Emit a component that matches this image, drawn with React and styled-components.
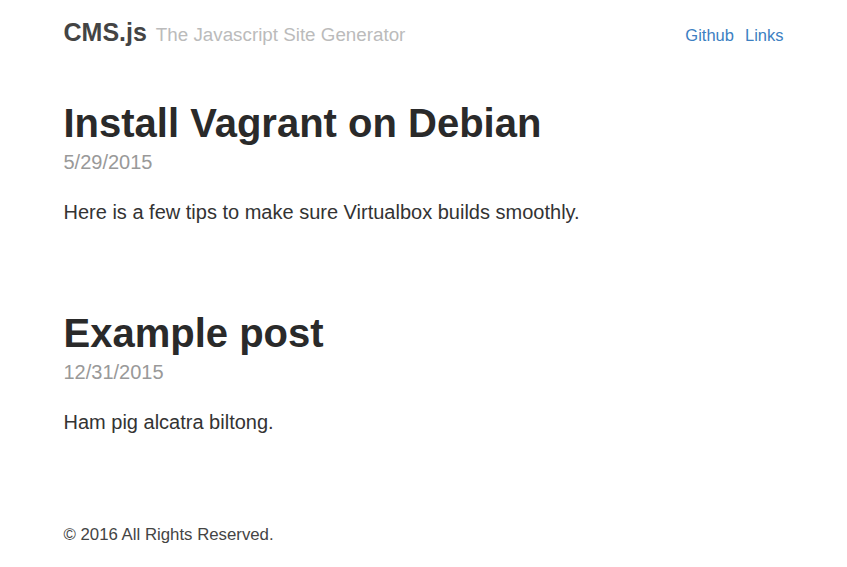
import React from 'react';
import styled, { createGlobalStyle } from 'styled-components';

const GlobalStyle = createGlobalStyle`
  body {
    margin: 0;
    background: #fff;
    font-family: 'Liberation Sans', Arial, sans-serif;
    color: #333;
  }
`;

const Container = styled.div`
  width: 720px;
  margin: 0 auto;
`;

const Header = styled.header`
  display: flex;
  align-items: baseline;
  justify-content: space-between;
  padding: 17px 0 12px;
  line-height: 30px;
`;

const Brand = styled.div`
  display: flex;
  align-items: baseline;
  gap: 9px;
`;

const Logo = styled.a`
  font-size: 25px;
  font-weight: 700;
  color: #444;
  text-decoration: none;
`;

const Tagline = styled.span`
  font-size: 18.8px;
  color: #bbb;
`;

const Nav = styled.nav`
  display: flex;
  gap: 11px;
`;

const NavLink = styled.a`
  font-size: 16.5px;
  color: #3c80c2;
  text-decoration: none;
`;

const Post = styled.article`
  padding-top: ${(p) => (p.$first ? '36px' : '82px')};
`;

const Title = styled.h1`
  margin: 0;
  font-size: 40px;
  line-height: 50px;
  font-weight: 700;
  color: #2a2a2a;
`;

const PostDate = styled.div`
  font-size: 20px;
  line-height: 28px;
  color: #999;
`;

const Excerpt = styled.p`
  margin: 22px 0 0;
  font-size: 20px;
  line-height: 28px;
  color: #333;
`;

const Footer = styled.footer`
  padding-top: 87px;
  font-size: 16.8px;
  line-height: 24px;
  color: #444;
`;

const posts = [
  { title: 'Install Vagrant on Debian', date: '5/29/2015', excerpt: 'Here is a few tips to make sure Virtualbox builds smoothly.' },
  { title: 'Example post', date: '12/31/2015', excerpt: 'Ham pig alcatra biltong.' },
];

export default function App() {
  return (
    <>
      <GlobalStyle />
      <Container>
        <Header>
          <Brand>
            <Logo href="#">CMS.js</Logo>
            <Tagline>The Javascript Site Generator</Tagline>
          </Brand>
          <Nav>
            <NavLink href="#">Github</NavLink>
            <NavLink href="#">Links</NavLink>
          </Nav>
        </Header>
        {posts.map((post, i) => (
          <Post key={post.title} $first={i === 0}>
            <Title>{post.title}</Title>
            <PostDate>{post.date}</PostDate>
            <Excerpt>{post.excerpt}</Excerpt>
          </Post>
        ))}
        <Footer>© 2016 All Rights Reserved.</Footer>
      </Container>
    </>
  );
}
